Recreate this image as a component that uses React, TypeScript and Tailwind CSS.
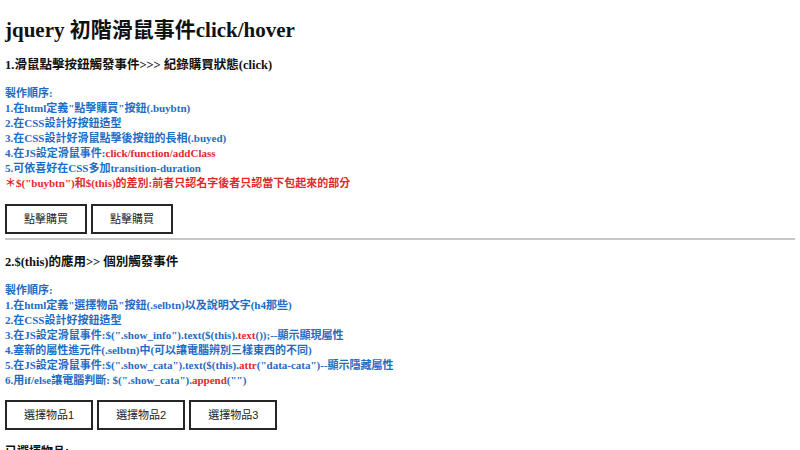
import React from "react";

const serif = { fontFamily: '"Liberation Serif", "Noto Sans CJK TC", serif' };
const sans = { fontFamily: '"Liberation Sans", "Noto Sans CJK TC", sans-serif' };

function Red({ children }: { children: React.ReactNode }) {
  return <span className="text-[#e02a2a]">{children}</span>;
}

function Btn({ label }: { label: string }) {
  return (
    <button
      style={sans}
      className="h-[30px] border-2 border-[#262626] bg-white px-[17px] text-[11px] text-[#222]"
    >
      {label}
    </button>
  );
}

export default function App() {
  return (
    <div style={serif} className="min-h-[450px] bg-white px-[5px] text-[#111]">
      <h1 className="pt-[18px] text-[21px] font-bold leading-[24px]">jquery 初階滑鼠事件click/hover</h1>

      <h3 className="mt-[15px] text-[12.5px] font-bold leading-[16px]">
        1.滑鼠點擊按鈕觸發事件&gt;&gt;&gt; 紀錄購買狀態(click)
      </h3>

      <div className="mt-[13px] text-[11px] font-bold leading-[15px] text-[#1f6cc4]">
        <p>製作順序:</p>
        <p>1.在html定義"點擊購買"按鈕(.buybtn)</p>
        <p>2.在CSS設計好按鈕造型</p>
        <p>3.在CSS設計好滑鼠點擊後按鈕的長相(.buyed)</p>
        <p>
          4.在JS設定滑鼠事件:<Red>click/function/addClass</Red>
        </p>
        <p>5.可依喜好在CSS多加transition-duration</p>
        <p>
          <Red>＊$("buybtn")和$(this)的差別:前者只認名字後者只認當下包起來的部分</Red>
        </p>
      </div>

      <div className="mt-[13px] flex gap-[4px]">
        <Btn label="點擊購買" />
        <Btn label="點擊購買" />
      </div>

      <hr className="mt-[4px] border-t-2 border-[#c8c8c8]" />

      <h3 className="mt-[14px] text-[12.5px] font-bold leading-[16px]">2.$(this)的應用&gt;&gt; 個別觸發事件</h3>

      <div className="mt-[13px] text-[11px] font-bold leading-[15px] text-[#1f6cc4]">
        <p>製作順序:</p>
        <p>1.在html定義"選擇物品"按鈕(.selbtn)以及說明文字(h4那些)</p>
        <p>2.在CSS設計好按鈕造型</p>
        <p>
          3.在JS設定滑鼠事件:$(".show_info").text($(this).<Red>text</Red>());--顯示顯現屬性
        </p>
        <p>4.塞新的屬性進元件(.selbtn)中(可以讓電腦辨別三樣東西的不同)</p>
        <p>
          5.在JS設定滑鼠事件:$(".show_cata").text($(this).<Red>attr</Red>("data-cata")--顯示隱藏屬性
        </p>
        <p>
          6.用if/else讓電腦判斷: $(".show_cata").<Red>append</Red>("")
        </p>
      </div>

      <div className="mt-[12px] flex gap-[4px]">
        <Btn label="選擇物品1" />
        <Btn label="選擇物品2" />
        <Btn label="選擇物品3" />
      </div>

      <h4 style={sans} className="mt-[14px] text-[12px] font-bold leading-[16px]">已選擇物品:</h4>
    </div>
  );
}
